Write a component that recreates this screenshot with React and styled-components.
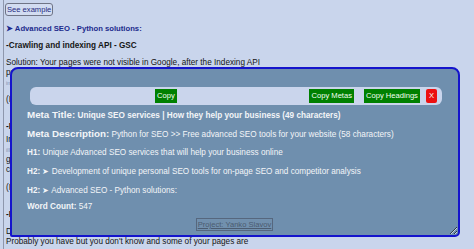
import React from "react";
import styled, { createGlobalStyle } from "styled-components";

const Global = createGlobalStyle`
  html, body { margin: 0; padding: 0; background: #c9d5ec; }
  body { font-family: "Liberation Sans", Arial, sans-serif; color: #111; overflow: hidden; }
`;

const Page = styled.div`
  margin-left: 3px;
  border-left: 1px solid #8e97ad;
  min-height: 249px;
  width: 280px;
  padding: 3px 0 0 1px;
  box-sizing: border-box;
`;

const SeeExample = styled.button`
  display: block;
  margin: 0;
  height: 13px;
  padding: 0 1px;
  border: 1px solid #6f7486;
  border-radius: 3px;
  background: #d2dcf1;
  color: #1f2a80;
  font: 7.6px "Liberation Sans", Arial, sans-serif;
  line-height: 11px;
`;

const Line = styled.div`
  margin-top: ${(p) => p.$mt || 0}px;
  padding-left: 1px;
  height: 10px;
  white-space: nowrap;
  line-height: 10px;
  font-size: ${(p) => (p.$small ? 6 : 8.2)}px;
  font-weight: ${(p) => (p.$bold ? 700 : 400)};
  color: ${(p) => (p.$small ? "#8490b4" : "#151515")};
`;

const BlueHeading = styled(Line)`
  font-size: 7.7px;
  font-weight: 700;
  color: #1c2a8c;
`;

const Modal = styled.div`
  position: fixed;
  z-index: 10;
  left: 10px;
  top: 67px;
  width: 450px;
  height: 170px;
  box-sizing: border-box;
  border: 2px solid #1414cc;
  border-radius: 8px 8px 5px 2px;
  background: #6f8fae;
  padding: 18px 16px 0 15px;
  resize: both;
  overflow: hidden;
  display: flex;
  flex-direction: column;
  color: #f3f5f8;
`;

const Toolbar = styled.div`
  flex: none;
  margin-left: 3px;
  height: 18px;
  background: #cad5ec;
  border-radius: 6px;
  display: flex;
  align-items: center;
  padding: 0 5px 0 125px;
  box-sizing: border-box;
`;

const Spacer = styled.div`
  flex: 1;
`;

const Btn = styled.button`
  height: 14px;
  margin-left: ${(p) => p.$ml || 0}px;
  padding: 0 ${(p) => (p.$danger ? 3 : 2)}px;
  border: none;
  border-radius: ${(p) => (p.$danger ? 2 : 0)}px;
  background: ${(p) => (p.$danger ? "#ec1010" : "#008000")};
  color: #f4fff4;
  font: 7.6px "Liberation Sans", Arial, sans-serif;
  line-height: 14px;
`;

const Row = styled.div`
  flex: none;
  line-height: ${(p) => p.$lh || 19}px;
  height: ${(p) => p.$lh || 19}px;
  white-space: nowrap;
  font-size: 8.2px;
  font-weight: ${(p) => (p.$bold ? 700 : 400)};
`;

const BigLabel = styled.span`
  font-size: 9.8px;
  font-weight: 700;
`;

const Label = styled.span`
  font-weight: 700;
`;

const Footer = styled.div`
  flex: none;
  display: flex;
  justify-content: center;
  margin-top: 4px;
`;

const ProjectBtn = styled.button`
  height: 13px;
  padding: 0 1px;
  border: 1px solid #56677e;
  background: #7190ae;
  color: #4b5b70;
  text-decoration: underline;
  font: 7.6px "Liberation Sans", Arial, sans-serif;
  line-height: 11px;
`;

export default function App() {
  return (
    <>
      <Global />
      <Page>
        <SeeExample>See example</SeeExample>
        <BlueHeading $mt={8}>➤ Advanced SEO - Python solutions:</BlueHeading>
        <Line $bold $mt={7}>-Crawling and indexing API - GSC</Line>
        <Line $mt={7}>Solution: Your pages were not visible in Google, after the Indexing API</Line>
        <Line>pushed them, they were indexed in a few hours.</Line>
        <Line $small>image: indexing API report</Line>
        <Line $mt={7}>(It works for new and updated pages)</Line>
        <Line $bold $mt={17}>-Internal linking analysis</Line>
        <Line $mt={3}>In most cases the important pages have weak links.</Line>
        <Line $small>illustration: link graph</Line>
        <Line>gives you a map of the whole website and</Line>
        <Line>counts the links to every page.</Line>
        <Line $mt={8}>(It works for every CMS)</Line>
        <Line $bold $mt={17}>-Indexing check of all pages</Line>
        <Line $mt={7}>Do you know how many of your pages are in Google?</Line>
        <Line>Probably you have but you don't know and some of your pages are</Line>
      </Page>
      <Modal>
        <Toolbar>
          <Btn>Copy</Btn>
          <Spacer />
          <Btn>Copy Metas</Btn>
          <Btn $ml={10}>Copy Headings</Btn>
          <Btn $danger $ml={6}>X</Btn>
        </Toolbar>
        <Row $bold>
          <BigLabel>Meta Title:</BigLabel> Unique SEO services | How they help your business (49 characters)
        </Row>
        <Row>
          <BigLabel>Meta Description:</BigLabel> Python for SEO &gt;&gt; Free advanced SEO tools for your website (58 characters)
        </Row>
        <Row>
          <Label>H1:</Label> Unique Advanced SEO services that will help your business online
        </Row>
        <Row>
          <Label>H2:</Label> ➤ Development of unique personal SEO tools for on-page SEO and competitor analysis
        </Row>
        <Row>
          <Label>H2:</Label> ➤ Advanced SEO - Python solutions:
        </Row>
        <Row $lh={14}>
          <Label>Word Count:</Label> 547
        </Row>
        <Footer>
          <ProjectBtn>Project: Yanko Slavov</ProjectBtn>
        </Footer>
      </Modal>
    </>
  );
}
